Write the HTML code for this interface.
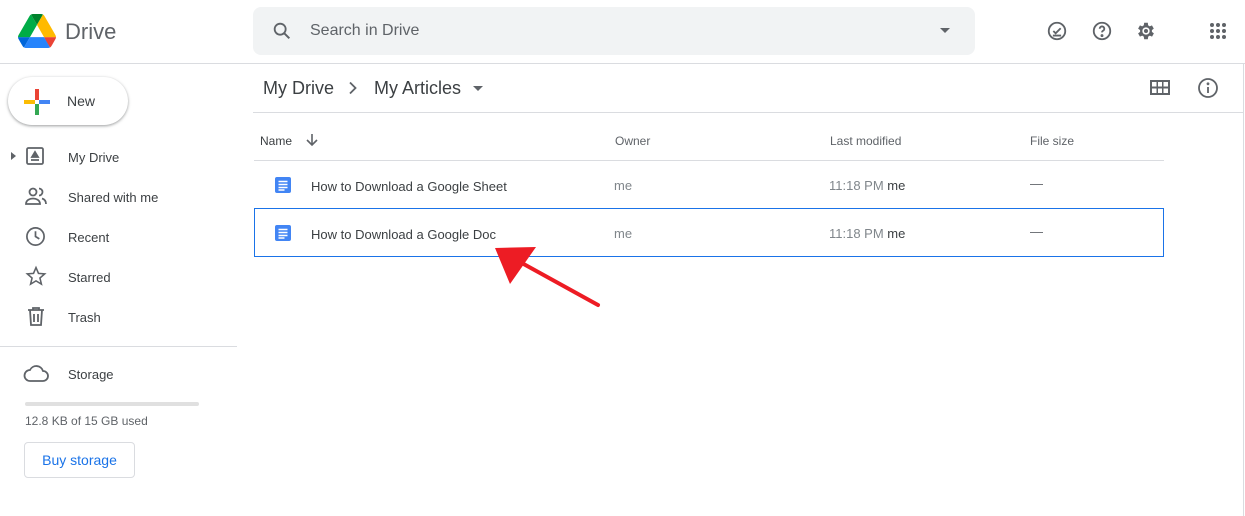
<!DOCTYPE html>
<html><head><style>
*{margin:0;padding:0;box-sizing:border-box}
body{width:1245px;height:516px;background:#fff;font-family:"Liberation Sans",Arial,sans-serif;position:relative;overflow:hidden;color:#3c4043}
.a{position:absolute}
.t{font-size:13px;color:#3c4043}
</style></head><body>
<!-- header -->
<svg class="a" style="left:18px;top:14px" width="38" height="34" viewBox="0 0 87.3 78"><path d="m6.6 66.85 3.85 6.65c.8 1.4 1.95 2.5 3.3 3.3l13.75-23.8h-27.5c0 1.55.4 3.1 1.2 4.5z" fill="#0066da"/><path d="m43.65 25-13.75-23.8c-1.35.8-2.5 1.9-3.3 3.3l-25.4 44a9.06 9.06 0 0 0 -1.2 4.5h27.5z" fill="#00ac47"/><path d="m73.55 76.8c1.35-.8 2.5-1.9 3.3-3.3l1.6-2.75 7.65-13.25c.8-1.4 1.2-2.95 1.2-4.5h-27.502l5.852 11.5z" fill="#ea4335"/><path d="m43.65 25 13.75-23.8c-1.35-.8-2.9-1.2-4.5-1.2h-18.5c-1.6 0-3.15.45-4.5 1.2z" fill="#00832d"/><path d="m59.8 53h-32.3l-13.75 23.8c1.35.8 2.9 1.2 4.5 1.2h50.8c1.6 0 3.15-.45 4.5-1.2z" fill="#2684fc"/><path d="m73.4 26.5-12.7-22c-.8-1.4-1.95-2.5-3.3-3.3l-13.75 23.8 16.15 28h27.45c0-1.55-.4-3.1-1.2-4.5z" fill="#ffba00"/></svg>
<div class="a" style="left:65px;top:19px;font-size:22px;color:#5f6368">Drive</div>
<div class="a" style="left:253px;top:7px;width:722px;height:48px;background:#f1f3f4;border-radius:8px"></div>
<svg class="a" style="left:271px;top:20px" width="22" height="22" viewBox="0 0 24 24"><circle cx="10" cy="10" r="6" fill="none" stroke="#5f6368" stroke-width="2"/><path d="M14.5 14.5 20 20" stroke="#5f6368" stroke-width="2.2"/></svg>
<div class="a" style="left:310px;top:22px;font-size:16px;color:#5f6368">Search in Drive</div>
<div class="a" style="left:940px;top:28px;border:5px solid transparent;border-top-color:#5f6368;border-bottom:0"></div>
<svg class="a" style="left:1046px;top:20px" width="22" height="22" viewBox="0 0 24 24" fill="none" stroke="#5f6368" stroke-width="2"><circle cx="12" cy="12" r="9"/><path d="M8 12l2.5 2.5L16 9M7.5 17h9"/></svg>
<svg class="a" style="left:1091px;top:20px" width="22" height="22" viewBox="0 0 24 24" fill="none" stroke="#5f6368" stroke-width="2"><circle cx="12" cy="12" r="9"/><path d="M9.5 9.5a2.5 2.5 0 1 1 3.5 2.3c-.7.4-1 .9-1 1.7"/><circle cx="12" cy="17" r=".6" fill="#5f6368"/></svg>
<svg class="a" style="left:1135px;top:20px" width="22" height="22" viewBox="0 0 24 24"><path fill="#5f6368" d="M19.4 13a7.5 7.5 0 0 0 0-2l2.1-1.6-2-3.5-2.5 1a7 7 0 0 0-1.7-1L15 3h-4l-.4 2.9a7 7 0 0 0-1.7 1l-2.5-1-2 3.5L6.6 11a7.5 7.5 0 0 0 0 2l-2.2 1.6 2 3.5 2.5-1a7 7 0 0 0 1.7 1L11 21h4l.4-2.9a7 7 0 0 0 1.7-1l2.5 1 2-3.5zM13 16a4 4 0 1 1 0-8 4 4 0 0 1 0 8z" transform="translate(-1 0)"/><circle cx="12" cy="12" r="2.2" fill="#5f6368"/></svg>
<svg class="a" style="left:1209px;top:22px" width="18" height="18" viewBox="0 0 18 18" fill="#5f6368"><circle cx="3" cy="3" r="2"/><circle cx="9" cy="3" r="2"/><circle cx="15" cy="3" r="2"/><circle cx="3" cy="9" r="2"/><circle cx="9" cy="9" r="2"/><circle cx="15" cy="9" r="2"/><circle cx="3" cy="15" r="2"/><circle cx="9" cy="15" r="2"/><circle cx="15" cy="15" r="2"/></svg>
<div class="a" style="left:0;top:63px;width:1245px;height:1px;background:#dadce0"></div>
<div class="a" style="left:1243px;top:63px;width:1px;height:453px;background:#dadce0"></div>
<!-- sidebar -->
<div class="a" style="left:8px;top:77px;width:120px;height:48px;border-radius:24px;background:#fff;box-shadow:0 1px 3px rgba(60,64,67,.35),0 1px 2px rgba(60,64,67,.2)"></div>
<svg class="a" style="left:24px;top:89px" width="26" height="26" viewBox="0 0 26 26"><rect x="11" y="0" width="4" height="11" fill="#ea4335"/><rect x="11" y="15" width="4" height="11" fill="#34a853"/><rect x="0" y="11" width="11" height="4" fill="#fbbc04"/><rect x="15" y="11" width="11" height="4" fill="#4285f4"/></svg>
<div class="a" style="left:67px;top:93px;font-size:14px;color:#3c4043">New</div>
<div class="a" style="left:11px;top:152px;border:4px solid transparent;border-left:5px solid #5f6368;border-right:0"></div>
<svg class="a" style="left:25px;top:146px" width="20" height="20" viewBox="0 0 20 20" fill="none" stroke="#5f6368" stroke-width="1.8"><rect x="2" y="2" width="16" height="16" rx="1.5"/><path d="M6 14h8M10 6l-3 5h6z" fill="#5f6368"/></svg>
<div class="a t" style="left:68px;top:150px">My Drive</div>
<svg class="a" style="left:24px;top:186px" width="24" height="20" viewBox="0 0 24 20" fill="none" stroke="#5f6368" stroke-width="1.8"><circle cx="9" cy="6" r="3.5"/><path d="M2 18c0-4 4-5.5 7-5.5s7 1.5 7 5.5z"/><path d="M15 2.5a3.5 3.5 0 0 1 0 7M18 12.5c2 .6 4 2 4 5.5"/></svg>
<div class="a t" style="left:68px;top:190px">Shared with me</div>
<svg class="a" style="left:25px;top:226px" width="21" height="21" viewBox="0 0 22 22" fill="none" stroke="#5f6368" stroke-width="1.8"><circle cx="11" cy="11" r="9"/><path d="M11 5.5V11l4 2.5"/></svg>
<div class="a t" style="left:68px;top:230px">Recent</div>
<svg class="a" style="left:25px;top:265px" width="22" height="22" viewBox="0 0 24 24" fill="none" stroke="#5f6368" stroke-width="1.7"><path d="M12 2.8l2.7 6.3 6.8.6-5.2 4.5 1.6 6.7L12 17.3l-5.9 3.6 1.6-6.7-5.2-4.5 6.8-.6z"/></svg>
<div class="a t" style="left:68px;top:270px">Starred</div>
<svg class="a" style="left:26px;top:306px" width="20" height="21" viewBox="0 0 20 21" fill="none" stroke="#5f6368" stroke-width="1.8"><path d="M2 4h16M7 4V2h6v2M4 4l1 15h10l1-15M8 8v8M12 8v8"/></svg>
<div class="a t" style="left:68px;top:310px">Trash</div>
<div class="a" style="left:0;top:346px;width:237px;height:1px;background:#dadce0"></div>
<svg class="a" style="left:23px;top:363px" width="26" height="20" viewBox="0 0 26 20" fill="none" stroke="#5f6368" stroke-width="1.8"><path d="M7 18h13a5 5 0 0 0 0-10 7 7 0 0 0-13-1 5.5 5.5 0 0 0 0 11z"/></svg>
<div class="a t" style="left:68px;top:367px">Storage</div>
<div class="a" style="left:25px;top:402px;width:174px;height:4px;background:#e0e0e0;border-radius:2px"></div>
<div class="a" style="left:25px;top:414px;font-size:12px;color:#5f6368">12.8 KB of 15 GB used</div>
<div class="a" style="left:24px;top:442px;width:111px;height:36px;border:1px solid #dadce0;border-radius:4px;color:#1a73e8;font-size:14px;line-height:34px;text-align:center">Buy storage</div>
<!-- main -->
<div class="a" style="left:263px;top:78px;font-size:18px;color:#3c4043">My Drive</div>
<svg class="a" style="left:346px;top:81px" width="14" height="14" viewBox="0 0 14 14" fill="none" stroke="#5f6368" stroke-width="1.8"><path d="M4 1.5 9.5 7 4 12.5"/></svg>
<div class="a" style="left:374px;top:78px;font-size:18px;color:#3c4043">My Articles</div>
<div class="a" style="left:473px;top:86px;border:5px solid transparent;border-top-color:#5f6368;border-bottom:0"></div>
<svg class="a" style="left:1150px;top:80px" width="20" height="15" viewBox="0 0 20 15" fill="#5f6368"><path d="M0 0h20v15H0zM2 2v4.5h4.5V2zm6 0v4.5h4V2zm5.5 0v4.5H18V2zM2 8.5V13h4.5V8.5zm6 0V13h4V8.5zm5.5 0V13H18V8.5z" fill-rule="evenodd"/></svg>
<svg class="a" style="left:1197px;top:77px" width="22" height="22" viewBox="0 0 22 22" fill="none" stroke="#5f6368" stroke-width="1.8"><circle cx="11" cy="11" r="9"/><path d="M11 10v6"/><circle cx="11" cy="6.8" r=".5" fill="#5f6368"/></svg>
<div class="a" style="left:253px;top:112px;width:990px;height:1px;background:#dadce0"></div>
<div class="a" style="left:260px;top:134px;font-size:12px;color:#3c4043;font-weight:bold;font-weight:normal">Name</div>
<svg class="a" style="left:305px;top:133px" width="14" height="14" viewBox="0 0 14 14" fill="none" stroke="#5f6368" stroke-width="1.6"><path d="M7 1v11M2 7l5 5 5-5"/></svg>
<div class="a" style="left:615px;top:134px;font-size:12px;color:#5f6368">Owner</div>
<div class="a" style="left:830px;top:134px;font-size:12px;color:#5f6368">Last modified</div>
<div class="a" style="left:1030px;top:134px;font-size:12px;color:#5f6368">File size</div>
<div class="a" style="left:254px;top:160px;width:910px;height:1px;background:#dadce0"></div>
<div class="a" style="left:254px;top:208px;width:910px;height:49px;border:1px solid #1a73e8"></div>
<svg class="a" style="left:275px;top:177px" width="16" height="16" viewBox="0 0 16 16"><rect width="16" height="16" rx="2" fill="#4285f4"/><path d="M3.5 4.5h9M3.5 7.5h9M3.5 10.5h9M3.5 13h6" stroke="#fff" stroke-width="1.5"/></svg>
<div class="a t" style="left:311px;top:179px">How to Download a Google Sheet</div>
<div class="a" style="left:614px;top:178px;font-size:13px;color:#80868b">me</div>
<div class="a" style="left:829px;top:178px;font-size:13px;color:#80868b">11:18 PM <span style="color:#3c4043">me</span></div>
<div class="a" style="left:1030px;top:176px;font-size:13px;color:#5f6368">—</div>
<svg class="a" style="left:275px;top:225px" width="16" height="16" viewBox="0 0 16 16"><rect width="16" height="16" rx="2" fill="#4285f4"/><path d="M3.5 4.5h9M3.5 7.5h9M3.5 10.5h9M3.5 13h6" stroke="#fff" stroke-width="1.5"/></svg>
<div class="a t" style="left:311px;top:227px">How to Download a Google Doc</div>
<div class="a" style="left:614px;top:226px;font-size:13px;color:#80868b">me</div>
<div class="a" style="left:829px;top:226px;font-size:13px;color:#80868b">11:18 PM <span style="color:#3c4043">me</span></div>
<div class="a" style="left:1030px;top:224px;font-size:13px;color:#5f6368">—</div>
<!-- arrow -->
<svg class="a" style="left:0;top:0" width="1245" height="516"><path d="M598 305 L520 262" stroke="#ed1c24" stroke-width="4" stroke-linecap="round"/><path d="M495 248 L536 247 L510 284 Z" fill="#ed1c24"/></svg>
</body></html>
